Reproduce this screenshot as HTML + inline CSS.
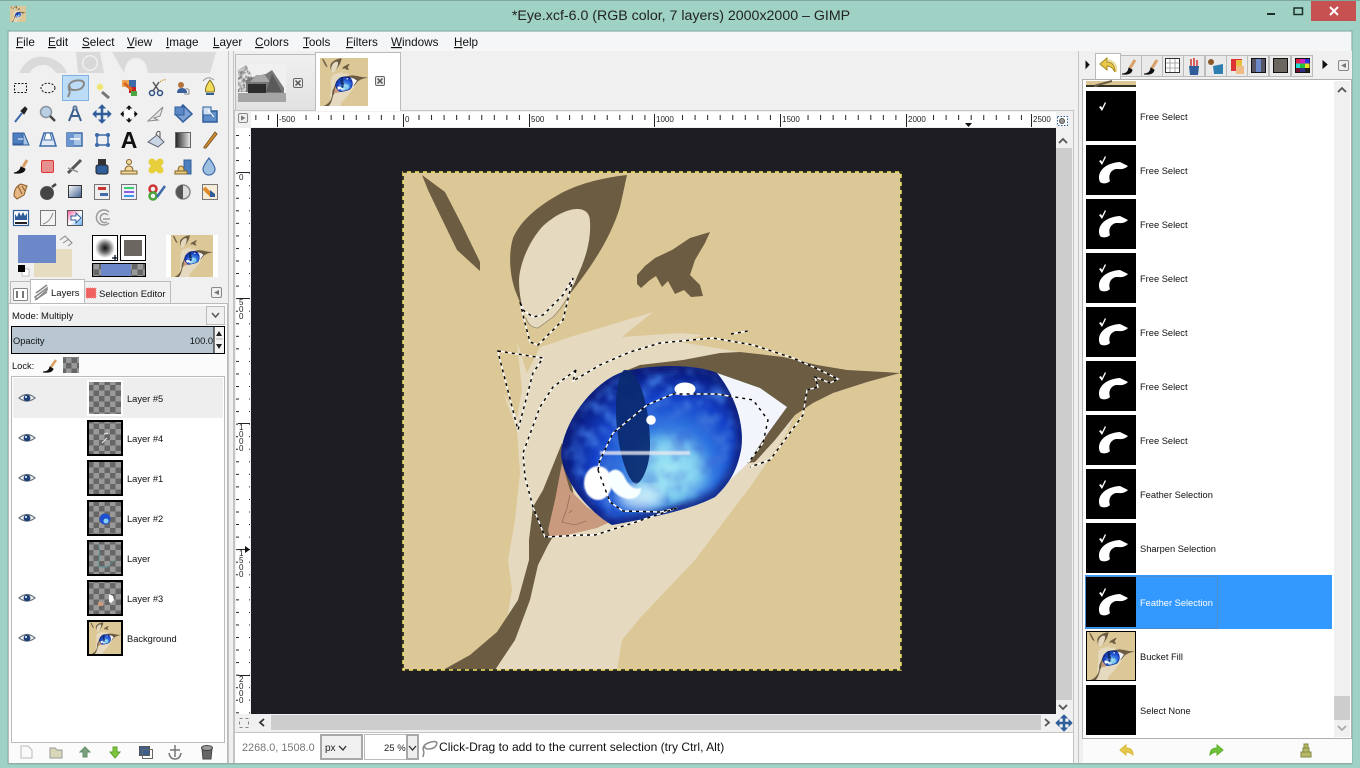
<!DOCTYPE html>
<html lang="en"><head><meta charset="utf-8"><title>GIMP</title>
<style>
html,body{margin:0;padding:0;width:1360px;height:768px;overflow:hidden;background:#9fd2c4}
svg{display:block;position:absolute;left:0;top:0}
text{font-family:"Liberation Sans",sans-serif;fill:#111}
.m{font-size:11.7px}
.s{font-size:9.3px}
.r{font-size:8px;fill:#222}
</style></head><body>
<svg width="1360" height="768" viewBox="0 0 1360 768" xmlns="http://www.w3.org/2000/svg">
<defs>
<pattern id="chk" width="11" height="11" patternUnits="userSpaceOnUse"><rect width="11" height="11" fill="#999"/><rect width="5.5" height="5.5" fill="#666"/><rect x="5.5" y="5.5" width="5.5" height="5.5" fill="#666"/></pattern>
<pattern id="tt" x="-8.2" y="0" width="12.55" height="15" patternUnits="userSpaceOnUse"><rect x="0" y="10" width="1" height="5" fill="#222"/></pattern>
<pattern id="tl" x="0" y="9.5" width="15" height="12.55" patternUnits="userSpaceOnUse"><rect x="9" y="0" width="5" height="1" fill="#222"/></pattern>
<radialGradient id="iris" gradientUnits="userSpaceOnUse" cx="668" cy="472" r="104"><stop offset="0" stop-color="#a8eaf6"/><stop offset=".24" stop-color="#6cc0ee"/><stop offset=".46" stop-color="#2e74e0"/><stop offset=".72" stop-color="#1440c8"/><stop offset="1" stop-color="#0a1c80"/></radialGradient>
<filter id="cloud" x="0" y="0" width="100%" height="100%"><feTurbulence type="fractalNoise" baseFrequency=".07" numOctaves="3" seed="7"/><feColorMatrix type="matrix" values="0 0 0 0 .04  0 0 0 0 .16  0 0 0 0 .7  3 0 0 0 -1.25"/><feGaussianBlur stdDeviation="1.5"/><feComposite in2="SourceAlpha" operator="in"/></filter>
<filter id="soft2"><feGaussianBlur stdDeviation=".8"/></filter>
<filter id="soft3"><feGaussianBlur stdDeviation="6"/></filter>
<filter id="soft4"><feGaussianBlur stdDeviation="3.5"/></filter>
<clipPath id="irisclip"><path d="M620 373C640 366 690 362 717 373C735 395 745 425 741 450C737 470 730 483 715 497C690 510 650 518 612 525C590 512 565 485 561 455C562 425 590 385 620 373Z"/></clipPath>
<symbol id="art" viewBox="403 172 498 498">
<rect x="403" y="172" width="498" height="498" fill="#dcc797"/>
<path d="M422 175 445 192 462 225 480 262 480 271 457 250 440 215 428 190Z" fill="#6b5c42"/>
<path d="M627 175C600 178 575 185 558 195C535 208 520 222 513 238C508 255 510 275 515 290L521 305 560 305 573 290C590 268 610 240 620 207Z" fill="#6b5c42"/>
<path d="M710 232 690 238 672 250 655 258 645 266 637 275 637 284 641 288 650 280 656 276 662 287 668 281 675 294 684 290 691 297 703 296 700 285 690 275 695 260 705 243Z" fill="#6b5c42"/>
<path d="M577 209C585 209 590 213 590 222C591 240 586 258 577 277C572 290 565 302 553 317L538 328C533 328 528 325 526 318C522 308 519 295 519 280C520 262 530 240 543 226C555 215 568 209 577 209Z" fill="#e5dabf"/>
<path d="M573 285C568 300 560 310 553 317L538 328C533 328 528 325 526 318" fill="none" stroke="#8d8269" stroke-width=".7"/>
<path d="M517 342 527 373 540 347 553 343 570 337 620 322 653 312 622 337 680 333 703 335 680 342 740 352 800 400 787 433 753 483 695 560 640 618 622 640 617 670 495 670 505 630 512 590 508 560 515 520 520 473 517 430 503 392 517 417 522 390Z" fill="#e5dabf"/>
<path d="M443 670 470 655 497 632 518 600 529 560 529 540 533 507 543 490 562 443 575 500 548 545 538 565 530 600 515 640 495 670Z" fill="#6b5c42"/>
<path d="M620 373 640 365 683 360 720 353 740 352 783 357 817 365 847 370 900 373 867 382 833 393 813 403 795 415 775 440 755 462 748 463 720 440 700 390Z" fill="#6b5c42"/>
<path d="M717 373 760 388 787 407 763 440 748 463 727 483 700 420Z" fill="#f3f5fd"/>
<path d="M562 463 570 490 587 507 610 522 597 528 567 535 550 538 548 530 555 500Z" fill="#c99a7d"/>
<path d="M570 495 567 508 562 522M562 522 575 525 586 521M572 510 569 513" fill="none" stroke="#8a5e48" stroke-width=".6"/>
<path d="M620 373C640 366 690 362 717 373C735 395 745 425 741 450C737 470 730 483 715 497C690 510 650 518 612 525C590 512 565 485 561 455C562 425 590 385 620 373Z" fill="url(#iris)"/>
<path d="M620 373C640 366 690 362 717 373C735 395 745 425 741 450C737 470 730 483 715 497C690 510 650 518 612 525C590 512 565 485 561 455C562 425 590 385 620 373Z" fill="#000" filter="url(#cloud)"/>
<g clip-path="url(#irisclip)"><path d="M620 373C640 366 690 362 717 373C735 395 745 425 741 450C737 470 730 483 715 497C690 510 650 518 612 525C590 512 565 485 561 455C562 425 590 385 620 373Z" fill="none" stroke="#0a1a78" stroke-width="12" opacity=".8" filter="url(#soft4)"/>
<ellipse cx="668" cy="470" rx="36" ry="30" fill="#9fe6f4" opacity=".55" filter="url(#soft3)"/></g>
<path d="M624 370C640 368 650 410 650 445C650 470 640 484 636 484C625 480 616 440 616 410C616 390 618 375 624 370Z" fill="#0a2a70" opacity=".93"/>
<rect x="600" y="451" width="90" height="4" fill="#e8e8f0" opacity=".8" filter="url(#soft2)"/>
<ellipse cx="640" cy="497" rx="22" ry="12" fill="#dff8fc" opacity=".8" filter="url(#soft3)"/>
<ellipse cx="598" cy="483" rx="14" ry="17" fill="#fff" filter="url(#soft2)"/>
<path d="M608 474C614 466 622 470 625 478C630 488 636 490 641 488C641 497 632 501 624 498C614 495 606 484 608 474Z" fill="#f8ffff" filter="url(#soft2)"/>
<ellipse cx="685" cy="389" rx="10.5" ry="6.5" fill="#fff"/>
<circle cx="651" cy="420" r="4.8" fill="#fff"/>
</symbol>
<symbol id="msk" viewBox="0 0 50 50"><rect width="50" height="50" fill="#000"/><path d="M14 37C10 28 18 18 34 17L42 21C38 25 34 24 30 24C25 25 22 30 24 36C21 39 16 39 14 37Z" fill="#fff"/><path d="M13 16 15 15 16 17 19 11 20 12 16 20Z" fill="#fff"/></symbol>
<symbol id="mk1" viewBox="0 0 50 50"><rect width="50" height="50" fill="#000"/><path d="M13 16 15 15 16 17 19 11 20 12 16 20Z" fill="#fff"/></symbol>
<g id="eye"><path d="M-8 0Q0-7 8 0Q0 6-8 0Z" fill="#f4f4f4" stroke="#6f7780" stroke-width="1.2"/><circle r="3.4" fill="#1f3f78"/><circle cx="-1" cy="-1" r="1" fill="#fff"/></g>
</defs>

<!-- window frame -->
<rect width="1360" height="768" fill="#9fd2c4"/>
<rect x="0" y="0" width="1360" height="1" fill="#7fa89e"/>
<rect x="8" y="31" width="1344" height="733" fill="#f0f0f0" stroke="#7fa89e"/>
<g transform="translate(10,5)"><use href="#art" width="16" height="18"/></g>
<text x="681" y="20" text-anchor="middle" style="font-size:14.2px;fill:#222">*Eye.xcf-6.0 (RGB color, 7 layers) 2000x2000 – GIMP</text>
<rect x="1267" y="13" width="8" height="2" fill="#1b2f2b"/>
<rect x="1294" y="8" width="8.500" height="6.500" fill="none" stroke="#1b2f2b" stroke-width="1.500"/>
<rect x="1311" y="1" width="45" height="20" fill="#c75050"/>
<path d="M1330 7 1338 15M1338 7 1330 15" stroke="#fff" stroke-width="2"/>

<!-- menu -->
<rect x="9" y="32" width="1342" height="19" fill="#f4f6f8"/>
<text class="m" x="16" y="46"><tspan text-decoration="underline">F</tspan>ile</text>
<text class="m" x="48" y="46"><tspan text-decoration="underline">E</tspan>dit</text>
<text class="m" x="82" y="46"><tspan text-decoration="underline">S</tspan>elect</text>
<text class="m" x="127" y="46"><tspan text-decoration="underline">V</tspan>iew</text>
<text class="m" x="166" y="46"><tspan text-decoration="underline">I</tspan>mage</text>
<text class="m" x="213" y="46"><tspan text-decoration="underline">L</tspan>ayer</text>
<text class="m" x="255" y="46"><tspan text-decoration="underline">C</tspan>olors</text>
<text class="m" x="303" y="46"><tspan text-decoration="underline">T</tspan>ools</text>
<text class="m" x="346" y="46"><tspan text-decoration="underline">F</tspan>ilters</text>
<text class="m" x="391" y="46"><tspan text-decoration="underline">W</tspan>indows</text>
<text class="m" x="454" y="46"><tspan text-decoration="underline">H</tspan>elp</text>

<!-- toolbox watermark -->
<path d="M19 73Q28 54 46 57Q62 60 67 73H56Q50 64 42 65Q33 66 30 73ZM76 52H100L104 73H78ZM124 73Q126 58 136 58Q146 58 148 73H210L216 52H112Z" fill="#dadada"/>
<circle cx="90" cy="63" r="8" fill="#f0f0f0"/><circle cx="90" cy="63" r="6.500" fill="#d8d8d8"/>

<!-- tool active -->
<rect x="62.500" y="75.500" width="26" height="25" fill="#bcdcf7" stroke="#7fb2e2"/>
<g fill="none" stroke-width="1">
<!-- row 1 -->
<rect x="14.500" y="83.500" width="12" height="9" stroke="#111" stroke-dasharray="2 1.500"/>
<ellipse cx="48" cy="88" rx="7" ry="4.800" stroke="#111" stroke-dasharray="2 1.500"/>
<path d="M70 92Q66 84 74 81Q84 79 84 84Q83 90 74 90Q69 90 70 86M70 92 68 97" stroke="#888" stroke-width="2"/>
<path d="M102 92 109 98" stroke="#777" stroke-width="3"/><circle cx="100" cy="87" r="3" fill="#f0e26a" stroke="#f5ee9a"/>
<rect x="122" y="80" width="7" height="7" fill="#eea458"/><rect x="129" y="80" width="7" height="7" fill="#3d6aa8"/><rect x="129" y="87" width="7" height="6" fill="#c82020"/><rect x="131" y="91" width="6" height="5" fill="#4ca640"/><path d="M124 83 132 90" stroke="#d9661f" stroke-width="3"/>
<circle cx="152" cy="93" r="2.500" stroke="#2b4f84" stroke-width="1.500"/><circle cx="160" cy="93" r="2.500" stroke="#2b4f84" stroke-width="1.500"/><path d="M153 91 159 82M159 91 153 82" stroke="#555" stroke-width="1.500"/><path d="M160 82Q163 79 166 80" stroke="#c8931e" stroke-dasharray="1.500 1"/>
<circle cx="181" cy="85" r="3" fill="#b5713a"/><path d="M177 93Q177 88 182 88Q187 88 187 93Z" fill="#3b5f9a"/><path d="M186 88 189 90V94H184" stroke="#888"/>
<path d="M210 80Q204 88 206 92H214Q216 88 210 80Z" fill="#f2dc5a" stroke="#7a6a22"/><path d="M206 94H214" stroke="#2f5e9a" stroke-width="2"/><path d="M203 81Q208 75 214 80" stroke="#999"/>
<!-- row 2 -->
<path d="M15 122 22 113" stroke="#3d6aa8" stroke-width="2"/><path d="M21 111 25 107 27 109 24 114Z" fill="#222" stroke="#222"/>
<circle cx="46" cy="112" r="5.500" fill="#b9cfe4" stroke="#8a94a0" stroke-width="1.500"/><path d="M50 116 55 121" stroke="#444" stroke-width="2.500"/>
<path d="M75 106 69 121M75 106 81 121M70 116H80" stroke="#3d5f8e" stroke-width="2"/><circle cx="75" cy="108" r="2" fill="#9aa8b8" stroke="#3d5f8e"/>
<path d="M102 106V122M94 114H110" stroke="#2f5e9a" stroke-width="2.500"/><path d="M102 105 99 108H105ZM102 123 99 120H105ZM93 114 96 111V117ZM111 114 108 111V117Z" fill="#2f5e9a" stroke="#2f5e9a"/>
<rect x="124" y="110" width="10" height="8" fill="#fff" stroke="#eee"/><path d="M129 106V110M129 118V122M121 114H124M134 114H137" stroke="#111" stroke-width="1.500"/><path d="M129 106 127 108H131ZM129 122 127 120H131ZM121 114 123 112V116ZM137 114 135 112V116Z" fill="#111" stroke="#111"/>
<path d="M148 121 163 107 160 116 154 118 158 120 148 121Z" fill="#e8e8e8" stroke="#8a8a8a"/>
<path d="M183 105 192 114 183 122 175 114Z" fill="#7ea0d4" stroke="#2f5e9a" stroke-width="1.500"/><rect x="175" y="107" width="9" height="8" fill="#5a88c6" stroke="#2f5e9a"/>
<rect x="203" y="111" width="14" height="11" fill="#5f8fcb" stroke="#2f5e9a" stroke-width="1.500"/><rect x="203" y="107" width="8" height="8" fill="#cfe0f2" stroke="#2f5e9a"/><path d="M208 110 214 117" stroke="#fff"/>
<!-- row 3 -->
<path d="M13 133H24L29 145H13Z" fill="#a9c5e6" stroke="#2f5e9a" stroke-width="1"/><rect x="13" y="133" width="10" height="11" fill="#4d7fc0" stroke="#2f5e9a"/><path d="M18 139H23" stroke="#fff"/>
<path d="M44 133H52L56 146H40Z" fill="#dfe9f5" stroke="#3d6aa8" stroke-width="1.500"/><path d="M46 133H50L52 140H44Z" fill="#fff" stroke="#3d6aa8"/>
<rect x="67" y="133" width="15" height="13" fill="#a9c5e6" stroke="#3d6aa8" stroke-width="1.500"/><rect x="67" y="133" width="7" height="13" fill="#6a95cf"/><path d="M70 139H80" stroke="#fff" stroke-width="1.500"/>
<path d="M97 135H108M97 145H108M97 135V145M108 135V145" stroke="#3d6aa8" stroke-width="1.500"/><g fill="#3d6aa8"><circle cx="97" cy="135" r="2"/><circle cx="108" cy="135" r="2"/><circle cx="97" cy="145" r="2"/><circle cx="108" cy="145" r="2"/></g>
<path d="M148 142 157 135 164 142 158 147Z" fill="#c9d4e4" stroke="#667"/><path d="M156 135Q157 130 160 132V138" stroke="#555"/>
<defs><linearGradient id="gb"><stop offset="0" stop-color="#222"/><stop offset="1" stop-color="#eee"/></linearGradient><linearGradient id="gg" x1="0" y1="0" x2="1" y2="1"><stop offset="0" stop-color="#fff"/><stop offset="1" stop-color="#3d5f8e"/></linearGradient></defs>
<rect x="175.500" y="132.500" width="15" height="15" fill="url(#gb)" stroke="#666"/>
<path d="M204 147 215 132 217 134 206 148 204 148Z" fill="#d98f2e" stroke="#7a5a22"/>
<!-- row 4 -->
<path d="M14 173Q20 172 21 167L25 169Q24 174 14 173Z" fill="#111" stroke="#111"/><path d="M23 167 27 160" stroke="#d9a066" stroke-width="3"/>
<rect x="41.500" y="160.500" width="12" height="12" rx="1.500" fill="#e88f8f" stroke="#d33"/>
<path d="M68 173 81 160" stroke="#555" stroke-width="3"/><path d="M68 168 78 172" stroke="#999" stroke-width="1.500"/>
<rect x="96" y="165" width="12" height="9" rx="2" fill="#2f5e9a" stroke="#222"/><rect x="98" y="159" width="8" height="6" fill="#333"/>
<path d="M121 171H137V174H121ZM125 171Q125 166 129 166Q133 166 133 171Z" fill="#f1d9a0" stroke="#85642a"/><circle cx="129" cy="162" r="2.500" stroke="#85642a" fill="#f1d9a0"/>
<path d="M152 162 160 170M160 162 152 170" stroke="#e6cf3a" stroke-width="7" stroke-linecap="round"/>
<rect x="184" y="160" width="7" height="14" fill="#4d7fc0" stroke="#2f5e9a"/><path d="M175 171H187V174H175ZM178 171Q178 166 181 166Q184 166 184 171Z" fill="#e8cb80" stroke="#85642a"/>
<path d="M209 158Q203 166 203 169A6 6 0 0 0 215 169Q215 166 209 158Z" fill="#9dbfe0" stroke="#3d6aa8" stroke-width="1.200"/>
<!-- row 5 -->
<path d="M14 196Q14 187 21 184L27 186 24 195 17 199Z" fill="#e6b684" stroke="#8a5a2a"/><path d="M18 186 22 194M22 186 25 191" stroke="#8a5a2a"/>
<circle cx="47" cy="193" r="6.500" fill="#444" stroke="#555"/><path d="M52 187 56 184" stroke="#444" stroke-width="2.500"/>
<path d="M68.500 185.500H81.500V197.500H68.500Z" fill="url(#gg)" stroke="#333"/>
<rect x="94.500" y="184.500" width="15" height="15" fill="#eee" stroke="#777"/><rect x="98" y="187" width="8" height="3" fill="#c33"/><rect x="100" y="193" width="8" height="3" fill="#3d6aa8"/>
<rect x="121.500" y="184.500" width="15" height="15" fill="#eef" stroke="#777"/><path d="M124 188H134" stroke="#3ccf6a" stroke-width="2"/><path d="M124 192H134" stroke="#8f5fe0" stroke-width="2"/><path d="M124 196H134" stroke="#3d9ae6" stroke-width="2"/>
<circle cx="153" cy="189" r="3.500" stroke="#c33" stroke-width="2.500"/><circle cx="153" cy="196" r="3.500" stroke="#4aa63a" stroke-width="2.500"/><path d="M157 197 165 186" stroke="#3d6aa8" stroke-width="2.500"/>
<circle cx="183" cy="192" r="7" fill="#ddd" stroke="#888" stroke-width="1.500"/><path d="M183 185A7 7 0 0 0 183 199Z" fill="#555"/>
<rect x="202.500" y="184.500" width="15" height="15" fill="#f5ecd8" stroke="#777"/><path d="M204 188 212 196" stroke="#e0892a" stroke-width="4"/><path d="M210 197V190L215 194V197Z" fill="#2f5e9a"/>
<!-- row 6 -->
<rect x="13.500" y="210.500" width="15" height="15" fill="#fff" stroke="#2f5e9a" stroke-width="1.200"/><path d="M15 220V214L17 217 19 212 21 216 23 212 25 216 27 213V220Z" fill="#2f5e9a"/><path d="M15 223H27" stroke="#222" stroke-width="2"/>
<rect x="40.500" y="210.500" width="15" height="15" fill="#f3f3f3" stroke="#777"/><path d="M43 224Q50 222 53 213" stroke="#888"/>
<defs><linearGradient id="gm" x1="0" y1="0" x2="1" y2="1"><stop offset="0" stop-color="#f59"/><stop offset=".5" stop-color="#fff"/><stop offset="1" stop-color="#5af"/></linearGradient></defs>
<rect x="67.500" y="210.500" width="15" height="15" fill="url(#gm)" stroke="#555"/><path d="M71 216H76V213L81 218 76 223V220H71Z" fill="#fff" stroke="#2f5e9a"/>
<path d="M109 212A7.500 7.500 0 1 0 109 223M110 219H103M108 215A4.500 4.500 0 1 0 107 222" stroke="#999" stroke-width="1.500"/>
</g>
<text x="129" y="148" text-anchor="middle" style="font-size:23px;font-weight:bold;fill:#111">A</text>

<!-- colour area -->
<rect x="34" y="249" width="38" height="28" fill="#e6dcc0"/>
<rect x="18" y="235" width="38" height="28" fill="#6d88c8"/>
<rect x="22" y="269" width="7" height="7" fill="#fff" stroke="#888" stroke-width=".5"/><rect x="18" y="265" width="7" height="7" fill="#000"/>
<path d="M60 240 65 236 72 243 68 246M63 243 69 239" fill="none" stroke="#888"/>
<defs><radialGradient id="br"><stop offset="0" stop-color="#111"/><stop offset=".35" stop-color="#666"/><stop offset=".8" stop-color="#fff"/></radialGradient></defs>
<rect x="92.500" y="235.500" width="25" height="25" fill="url(#br)" stroke="#000"/>
<path d="M112 258H118M115 255V261" stroke="#012" stroke-width="1.300"/>
<rect x="120.500" y="235.500" width="25" height="25" fill="#fff" stroke="#000"/><rect x="124" y="240" width="18" height="16" fill="#6b6660"/>
<rect x="92.500" y="263.500" width="53" height="13" fill="url(#chk)" stroke="#000"/><rect x="101" y="264" width="30" height="12" fill="#6d88c8"/>
<rect x="166" y="235" width="52" height="42" fill="#fff"/><use href="#art" x="171" y="235" width="42" height="42"/>

<!-- dock tabs -->
<rect x="8" y="303" width="220" height="461" fill="#fbfbfb"/>
<rect x="10.500" y="281.500" width="20" height="22" fill="#f0f0f0" stroke="#bbb"/>
<rect x="13.500" y="288.500" width="14" height="12" rx="1" fill="#fff" stroke="#888"/><path d="M17 291V298M23 291V298" stroke="#777" stroke-width="2"/>
<rect x="84.500" y="281.500" width="86" height="22" fill="#f0f0f0" stroke="#bbb"/>
<rect x="86" y="288" width="10" height="10" fill="#ef6060" stroke="#f39090" stroke-dasharray="1 1"/>
<text class="s" x="99" y="297" style="font-size:9.500px">Selection Editor</text>
<path d="M30.500 304V279.500H84.500V304" fill="#fff" stroke="#bbb"/>
<rect x="31" y="280" width="53" height="25" fill="#fff"/>
<path d="M35 297 47 288V290L37 299ZM35 300 47 292M36 293 47 285" fill="none" stroke="#888" stroke-width="1.500"/>
<text class="s" x="51" y="296" style="font-size:9.500px">Layers</text>
<rect x="211.500" y="287.500" width="10" height="10" rx="1.500" fill="#eee" stroke="#888"/><path d="M219 290V295L214 292.500Z" fill="#777"/>
<rect x="8.500" y="303.500" width="219" height="460" fill="none" stroke="#bbb"/>

<rect x="40" y="306" width="167" height="20" fill="#efefef"/>
<text class="s" x="12" y="319" style="font-size:9.500px">Mode: Multiply</text>
<rect x="206.500" y="306.500" width="18" height="18" fill="#f0f0f0" stroke="#bbb"/><path d="M212 313 215.500 317 219 313" fill="none" stroke="#555" stroke-width="1.500"/>
<rect x="11.500" y="326.500" width="213" height="27" fill="#b8c7d2" stroke="#000"/>
<rect x="214" y="327" width="10" height="26" fill="#f2f2f2"/><path d="M214 327V353" stroke="#000"/><path d="M216 339H223" stroke="#bbb"/>
<path d="M219 331 216 336H222ZM219 349 216 344H222Z" fill="#222"/>
<text class="s" x="13" y="344">Opacity</text>
<text class="s" x="213" y="344" text-anchor="end">100.0</text>
<text class="s" x="12" y="369">Lock:</text>
<path d="M43 372Q49 372 50 367L53 369Q52 373 43 372Z" fill="#111" stroke="#111"/><path d="M51 367 56 360" stroke="#d9a066" stroke-width="2.500"/>
<rect x="63" y="357" width="16" height="16" fill="url(#chk)"/>

<!-- layers list -->
<rect x="11.500" y="376.500" width="213" height="366" fill="#fff" stroke="#bbb"/>
<rect x="13" y="378" width="210" height="40" fill="#eee"/>
<rect x="87" y="380" width="36" height="36" fill="#fff"/><rect x="89" y="382" width="32" height="32" fill="url(#chk)"/>
<g fill="url(#chk)" stroke="#000" stroke-width="2">
<rect x="88" y="421" width="34" height="34"/><rect x="88" y="461" width="34" height="34"/><rect x="88" y="501" width="34" height="34"/><rect x="88" y="541" width="34" height="34"/><rect x="88" y="581" width="34" height="34"/>
</g>
<path d="M102 443 107 438M104 434 108 433" stroke="#eee" fill="none"/>
<path d="M101 480 105 474" stroke="#777" stroke-dasharray="1 2"/>
<circle cx="105" cy="519" r="5.500" fill="#1d4fcf"/><circle cx="106" cy="521" r="2.500" fill="#8bd0f0"/>
<path d="M99 545 100 555 98 566 105 568 115 560" fill="none" stroke="#5aa0a0" stroke-width=".8"/>
<path d="M109 594 113 596 114 600 111 603 109 602Z" fill="#fff"/><rect x="98" y="602" width="5" height="4" fill="#c99a7d"/>
<rect x="88" y="621" width="34" height="34" fill="#000" stroke="#000" stroke-width="2"/><use href="#art" x="89" y="622" width="32" height="32"/>
<use href="#eye" x="27" y="398"/><use href="#eye" x="27" y="438"/><use href="#eye" x="27" y="478"/><use href="#eye" x="27" y="518"/><use href="#eye" x="27" y="598"/><use href="#eye" x="27" y="638"/>
<text class="s" x="127" y="402">Layer #5</text>
<text class="s" x="127" y="442">Layer #4</text>
<text class="s" x="127" y="482">Layer #1</text>
<text class="s" x="127" y="522">Layer #2</text>
<text class="s" x="127" y="562">Layer</text>
<text class="s" x="127" y="602">Layer #3</text>
<text class="s" x="127" y="642">Background</text>

<!-- layers footer icons -->
<path d="M21 746H28L32 750V758H21Z" fill="#fafafa" stroke="#bbb"/>
<path d="M50 748H55L57 750H62V758H50Z" fill="#d8d8b8" stroke="#999"/>
<path d="M85 747 90 752H87V757H83V752H80Z" fill="#7fa07f" stroke="#5f8f6a"/>
<path d="M115 758 120 752H117V747H113V752H110Z" fill="#7fc83a" stroke="#5fa030"/>
<rect x="139.500" y="746.500" width="10" height="9" fill="#3d5f8e" stroke="#555"/><rect x="142.500" y="749.500" width="10" height="9" fill="none" stroke="#666"/>
<path d="M175 745V757M170 750H180M169 753Q170 759 175 759Q180 759 181 753" fill="none" stroke="#777" stroke-width="1.500"/>
<path d="M202 748H212L211 759H203Z" fill="#666" stroke="#444"/><ellipse cx="207" cy="748" rx="5.500" ry="2.500" fill="#999" stroke="#444"/>

<!-- image area -->
<rect x="228" y="51" width="6" height="713" fill="#f0f0f0"/>
<path d="M228.500 51V764M233.500 51V764" stroke="#c4c4c4"/>
<rect x="234" y="51" width="845" height="60" fill="#f0f0f0"/>
<defs><linearGradient id="tg" x1="0" y1="0" x2="0" y2="1"><stop offset="0" stop-color="#f0f0f0"/><stop offset="1" stop-color="#e2e2e2"/></linearGradient><filter id="trees" x="0" y="0" width="100%" height="100%"><feTurbulence type="fractalNoise" baseFrequency=".35" numOctaves="2" seed="3"/><feColorMatrix type="matrix" values="0 0 0 0 .2 0 0 0 0 .2 0 0 0 0 .2 2.4 0 0 0 -.75"/><feComposite in2="SourceAlpha" operator="in"/></filter></defs>
<path d="M235.500 110V54.500H315.500V110" fill="url(#tg)" stroke="#bbb"/>
<rect x="238" y="64" width="48" height="38" fill="#f0f0f0"/>
<path d="M238 92V70L246 65 252 76 252 92Z" fill="#000" filter="url(#trees)"/>
<path d="M246 92V80L256 76 266 74 272 70 284 88V94Z" fill="#777"/>
<path d="M250 82H270L265 75H256Z" fill="#a8a8a8"/><rect x="248" y="84" width="18" height="9" fill="#2c2c2c"/><path d="M266 92 272 74 282 92Z" fill="#5a5a5a"/><rect x="238" y="93" width="48" height="9" fill="#a5a5a5"/>
<rect x="293.500" y="78.500" width="9" height="9" rx="1.500" fill="#e8e8e8" stroke="#666"/><path d="M295.500 80.500 300.500 85.500M300.500 80.500 295.500 85.500" stroke="#555" stroke-width="1.500"/>
<path d="M315.500 111V52.500H400.500V111" fill="#fff" stroke="#bbb"/>
<use href="#art" x="320" y="58" width="48" height="48"/>
<rect x="375.500" y="76.500" width="9" height="9" rx="1.500" fill="#e8e8e8" stroke="#666"/><path d="M377.500 78.500 382.500 83.500M382.500 78.500 377.500 83.500" stroke="#555" stroke-width="1.500"/>
<rect x="234" y="111" width="845" height="653" fill="#f0f0f0"/>
<path d="M234.500 110.500H315.500M400.500 110.500H1073" stroke="#c4c4c4"/>
<path d="M234.500 110V764M1078.500 51V764" stroke="#c4c4c4"/>
<rect x="1073" y="51" width="6" height="713" fill="#f0f0f0"/><path d="M1073.500 110V764M1078.500 51V764" stroke="#c4c4c4"/>

<!-- rulers -->
<rect x="238.500" y="113.500" width="9" height="9" rx="1.500" fill="#eee" stroke="#888"/><path d="M241 115.500V120.500L245.500 118Z" fill="#777"/>
<rect x="251" y="112" width="805" height="15" fill="#fff"/>
<rect x="251" y="112" width="805" height="15" fill="url(#tt)"/>
<rect x="236" y="128" width="14" height="586" fill="#fff"/>
<rect x="236" y="128" width="14" height="586" fill="url(#tl)"/>
<g stroke="#222" fill="none">
<path d="M277.500 114V127M403.500 114V127M529.500 114V127M654.500 114V127M780.500 114V127M906.500 114V127M1031.500 114V127"/>
<path d="M238 172.500H250M238 298.500H250M238 423.500H250M238 549.500H250M238 675.500H250"/>
</g>
<rect x="279" y="114" width="19" height="9" fill="#fff"/><rect x="405" y="114" width="6" height="9" fill="#fff"/><rect x="531" y="114" width="15" height="9" fill="#fff"/><rect x="656" y="114" width="19" height="9" fill="#fff"/><rect x="782" y="114" width="19" height="9" fill="#fff"/><rect x="908" y="114" width="19" height="9" fill="#fff"/><rect x="1033" y="114" width="19" height="9" fill="#fff"/>
<rect x="238" y="173" width="7" height="8" fill="#fff"/><rect x="238" y="299" width="7" height="21" fill="#fff"/><rect x="238" y="424" width="7" height="28" fill="#fff"/><rect x="238" y="550" width="7" height="28" fill="#fff"/><rect x="238" y="676" width="7" height="28" fill="#fff"/>
<text class="r" x="279" y="122">-500</text><text class="r" x="405" y="122">0</text><text class="r" x="531" y="122">500</text><text class="r" x="656" y="122">1000</text><text class="r" x="782" y="122">1500</text><text class="r" x="908" y="122">2000</text><text class="r" x="1033" y="122">2500</text>
<path d="M965 123H972L968.500 127Z" fill="#111"/><path d="M245 546V553L250 549.500Z" fill="#111"/>
<text class="r" x="239" y="180">0</text>
<text class="r" x="239" y="305">5</text><text class="r" x="239" y="312">0</text><text class="r" x="239" y="319">0</text>
<text class="r" x="239" y="430">1</text><text class="r" x="239" y="437">0</text><text class="r" x="239" y="444">0</text><text class="r" x="239" y="451">0</text>
<text class="r" x="239" y="556">1</text><text class="r" x="239" y="563">5</text><text class="r" x="239" y="570">0</text><text class="r" x="239" y="577">0</text>
<text class="r" x="239" y="682">2</text><text class="r" x="239" y="689">0</text><text class="r" x="239" y="696">0</text><text class="r" x="239" y="703">0</text>

<!-- canvas -->
<rect x="251" y="128" width="805" height="586" fill="#1e1d23"/>
<use href="#art" x="403" y="172" width="498" height="498"/>
<rect x="403" y="172" width="498" height="498" fill="none" stroke="#f0e060" stroke-width="1.500"/>
<rect x="403" y="172" width="498" height="498" fill="none" stroke="#111" stroke-width="1.500" stroke-dasharray="4 4"/>
<!-- selection outline -->
<g fill="none" stroke-width="1.400">
<g stroke="#fff">
<path d="M498 351 543 358 533 373 518 430 498 352Z"/>
<path d="M520 302 525 323 530 342 538 345 563 320 573 278 563 295 543 315 533 317 523 310Z"/>
<path d="M576 370 573 381 600 365 630 352 660 343 713 338 753 345 793 358 820 370 838 379 830 383 815 377 818 387 807 390 803 415 770 460 750 467M576 370 553 387 540 407 523 453 525 477 533 507 545 537 583 535 595 535 633 523 677 508"/>
<path d="M598 470 600 460 613 433 647 405 673 394 717 394 753 400 768 420 763 443 748 463M598 470 610 502 623 511 660 512 677 508"/>
<path d="M731 334 748 331"/>
</g>
<g stroke="#000" stroke-dasharray="3 4">
<path d="M498 351 543 358 533 373 518 430 498 352Z"/>
<path d="M520 302 525 323 530 342 538 345 563 320 573 278 563 295 543 315 533 317 523 310Z"/>
<path d="M576 370 573 381 600 365 630 352 660 343 713 338 753 345 793 358 820 370 838 379 830 383 815 377 818 387 807 390 803 415 770 460 750 467M576 370 553 387 540 407 523 453 525 477 533 507 545 537 583 535 595 535 633 523 677 508"/>
<path d="M598 470 600 460 613 433 647 405 673 394 717 394 753 400 768 420 763 443 748 463M598 470 610 502 623 511 660 512 677 508"/>
<path d="M731 334 748 331"/>
</g>
</g>

<!-- scrollbars -->
<rect x="1056" y="128" width="16" height="586" fill="#f0f0f0"/>
<rect x="1056" y="148" width="16" height="552" fill="#cdcdcd"/>
<path d="M1059 143 1063 139 1067 143" fill="none" stroke="#555" stroke-width="1.800"/>
<path d="M1059 705 1063 709 1067 705" fill="none" stroke="#555" stroke-width="1.800"/>
<rect x="1057.500" y="116.500" width="10" height="9" fill="#fff" stroke="#2f5e9a" stroke-dasharray="1.500 1.500"/><circle cx="1062" cy="121" r="2.500" fill="#999" stroke="#555"/>
<rect x="255" y="715" width="801" height="15" fill="#f0f0f0"/>
<rect x="271" y="715" width="770" height="15" fill="#cdcdcd"/>
<path d="M264 719 260 722.500 264 726" fill="none" stroke="#333" stroke-width="1.800"/>
<path d="M1045 719 1049 722.500 1045 726" fill="none" stroke="#555" stroke-width="1.800"/>
<rect x="239.500" y="718.500" width="9" height="9" fill="none" stroke="#888" stroke-dasharray="3 3"/>
<path d="M1064 717V729M1058 723H1070" stroke="#2f5e9a" stroke-width="2.500"/><path d="M1064 715 1061 718H1067ZM1064 731 1061 728H1067ZM1056 723 1059 720V726ZM1072 723 1069 720V726Z" fill="#2f5e9a" stroke="#2f5e9a"/>

<!-- status bar -->
<rect x="235" y="732" width="838" height="31" fill="#fff"/>
<path d="M235 732.500H1073" stroke="#c4c4c4"/>
<text x="242" y="751" style="font-size:10.900px;fill:#777">2268.0, 1508.0</text>
<rect x="321" y="735" width="41" height="24" fill="#f0f0f0" stroke="#a8a8a8" stroke-width="2"/>
<text x="325" y="751" style="font-size:10px;fill:#222">px</text><path d="M339 746 343 750 346 746" fill="none" stroke="#333" stroke-width="1.300"/>
<rect x="364.500" y="734.500" width="42" height="25" fill="#fff" stroke="#bbb"/>
<text x="384" y="751" style="font-size:9.500px;fill:#222">25 %</text>
<rect x="407" y="735" width="11" height="24" fill="#eee" stroke="#a8a8a8" stroke-width="2"/><path d="M409 746 412.500 750 416 746" fill="none" stroke="#333" stroke-width="1.300"/>
<path d="M424 752Q421 746 428 743Q436 740 437 743Q436 749 428 749Q424 749 425 746M424 752 423 757" fill="none" stroke="#888" stroke-width="1.500"/>
<text x="439" y="751" style="font-size:12.050px">Click-Drag to add to the current selection (try Ctrl, Alt)</text>

<!-- right dock -->
<rect x="1079" y="51" width="273" height="713" fill="#f0f0f0"/>
<path d="M1086 61.500V68L1089 64.700Z" fill="#111" stroke="#111"/>
<g fill="#eaeaea" stroke="#bbb">
<rect x="1120.500" y="55.500" width="21" height="21"/><rect x="1141.500" y="55.500" width="21" height="21"/><rect x="1162.500" y="55.500" width="21" height="21"/><rect x="1183.500" y="55.500" width="21" height="21"/><rect x="1205.500" y="55.500" width="21" height="21"/><rect x="1226.500" y="55.500" width="21" height="21"/><rect x="1247.500" y="55.500" width="21" height="21"/><rect x="1269.500" y="55.500" width="21" height="21"/><rect x="1291.500" y="55.500" width="21" height="21"/>
</g>
<path d="M1095.500 79V53.500H1120.500V79" fill="#fff" stroke="#bbb"/>
<path d="M1100 64 1107 58V62Q1115 62 1115 72Q1112 66 1107 66V70Z" fill="#e6c84a" stroke="#a88a20"/><path d="M1108 60Q1118 62 1116 72" fill="none" stroke="#e9d98a" stroke-width="1.500"/>
<path d="M1122 74Q1128 74 1129 68L1132 70Q1131 75 1122 74Z" fill="#111" stroke="#111"/><path d="M1130 68 1135 60" stroke="#d9a066" stroke-width="3"/>
<path d="M1144 74Q1150 74 1151 68L1154 70Q1153 75 1144 74Z" fill="#111" stroke="#111"/><path d="M1152 68 1157 60" stroke="#d9a066" stroke-width="3"/>
<rect x="1165.500" y="58.500" width="14" height="14" fill="#fff" stroke="#333"/><path d="M1170 59V72M1175 59V72M1166 63H1179M1166 68H1179" stroke="#aaa"/>
<path d="M1189 66H1199L1198 75H1190Z" fill="#2f5e9a"/><path d="M1191 66V59M1194 66V58M1197 66V60" stroke="#c33" stroke-width="1.500"/>
<circle cx="1211" cy="62" r="3" fill="#8a5a2a"/><path d="M1213 66 1223 64V74H1214Z" fill="#2f7fb0"/>
<rect x="1231" y="59" width="11" height="12" fill="#d33"/><rect x="1236" y="60" width="6" height="6" fill="#e8c040"/><path d="M1236 74V66L1244 66V74Z" fill="#eebc84"/>
<rect x="1251.500" y="58.500" width="14" height="14" fill="#6d88c8" stroke="#111"/><rect x="1252" y="59" width="4" height="13" fill="#556"/><rect x="1261" y="59" width="4" height="13" fill="#556"/>
<rect x="1273.500" y="58.500" width="14" height="14" fill="#6b6660" stroke="#111"/>
<rect x="1295.500" y="58.500" width="14" height="14" fill="#222" stroke="#111"/><rect x="1296" y="59" width="4.500" height="4.500" fill="#e0204a"/><rect x="1300" y="59" width="5" height="4.500" fill="#d020c0"/><rect x="1305" y="59" width="4.500" height="4.500" fill="#3030e0"/><rect x="1296" y="63.500" width="4.500" height="4.500" fill="#20e0d0"/><rect x="1300" y="63.500" width="5" height="4.500" fill="#20c040"/><rect x="1305" y="63.500" width="4.500" height="4.500" fill="#e8e020"/><rect x="1296" y="68" width="4.500" height="4" fill="#701030"/><rect x="1300" y="68" width="5" height="4" fill="#303080"/>
<path d="M1323 61V68L1327 64.500Z" fill="#111" stroke="#111"/>
<rect x="1338.500" y="60.500" width="10" height="10" rx="1.500" fill="#eee" stroke="#888"/><path d="M1346 63V68L1341 65.500Z" fill="#777"/>

<rect x="1082.500" y="79.500" width="269" height="659" fill="#fff" stroke="#b0b0b0"/>
<rect x="1083" y="739" width="269" height="24" fill="#fbfbfb"/>
<rect x="1085" y="575" width="247" height="54" fill="#3399ff"/>
<rect x="1085.500" y="576.500" width="132" height="52" fill="none" stroke="#5f7fa0" stroke-dasharray="1 1"/>
<!-- undo list -->
<rect x="1086" y="81" width="50" height="6" fill="#dcc797"/><path d="M1086 86H1136" stroke="#000" stroke-width="1.500"/><path d="M1094 86 1112 81" stroke="#6b5c42" stroke-width="2"/>
<use href="#mk1" x="1086" y="91" width="50" height="50"/>
<use href="#msk" x="1086" y="145" width="50" height="50"/>
<use href="#msk" x="1086" y="199" width="50" height="50"/>
<use href="#msk" x="1086" y="253" width="50" height="50"/>
<use href="#msk" x="1086" y="307" width="50" height="50"/>
<use href="#msk" x="1086" y="361" width="50" height="50"/>
<use href="#msk" x="1086" y="415" width="50" height="50"/>
<use href="#msk" x="1086" y="469" width="50" height="50"/>
<use href="#msk" x="1086" y="523" width="50" height="50"/>
<use href="#msk" x="1086" y="577" width="50" height="50"/>
<rect x="1086" y="631" width="50" height="50" fill="#000"/><use href="#art" x="1087" y="632" width="48" height="48"/>
<rect x="1086" y="685" width="50" height="50" fill="#000"/>
<text class="s" x="1140" y="120">Free Select</text>
<text class="s" x="1140" y="174">Free Select</text>
<text class="s" x="1140" y="228">Free Select</text>
<text class="s" x="1140" y="282">Free Select</text>
<text class="s" x="1140" y="336">Free Select</text>
<text class="s" x="1140" y="390">Free Select</text>
<text class="s" x="1140" y="444">Free Select</text>
<text class="s" x="1140" y="498">Feather Selection</text>
<text class="s" x="1140" y="552">Sharpen Selection</text>
<text class="s" x="1140" y="606" style="fill:#fff">Feather Selection</text>
<text class="s" x="1140" y="660">Bucket Fill</text>
<text class="s" x="1140" y="714">Select None</text>
<rect x="1334" y="81" width="16" height="656" fill="#f0f0f0"/>
<rect x="1334" y="696" width="16" height="24" fill="#cdcdcd"/>
<path d="M1338 92 1342 88 1346 92" fill="none" stroke="#555" stroke-width="1.800"/>
<path d="M1338 726 1342 730 1346 726" fill="none" stroke="#aaa" stroke-width="1.800"/>
<path d="M1120 750 1126 745V748Q1133 748 1133 755Q1130 752 1126 752V755Z" fill="#e6c84a" stroke="#d8b838"/>
<path d="M1223 750 1217 745V748Q1210 748 1210 755Q1213 752 1217 752V755Z" fill="#6fc03a" stroke="#5fb030"/>
<path d="M1301 752H1311V757H1301ZM1303 752V748H1309V752M1304 748V744H1308V748" fill="#b8b868" stroke="#7f8a40"/>
<rect x="8" y="763" width="1344" height="1.500" fill="#8cb0a6"/>
</svg>
</body></html>
